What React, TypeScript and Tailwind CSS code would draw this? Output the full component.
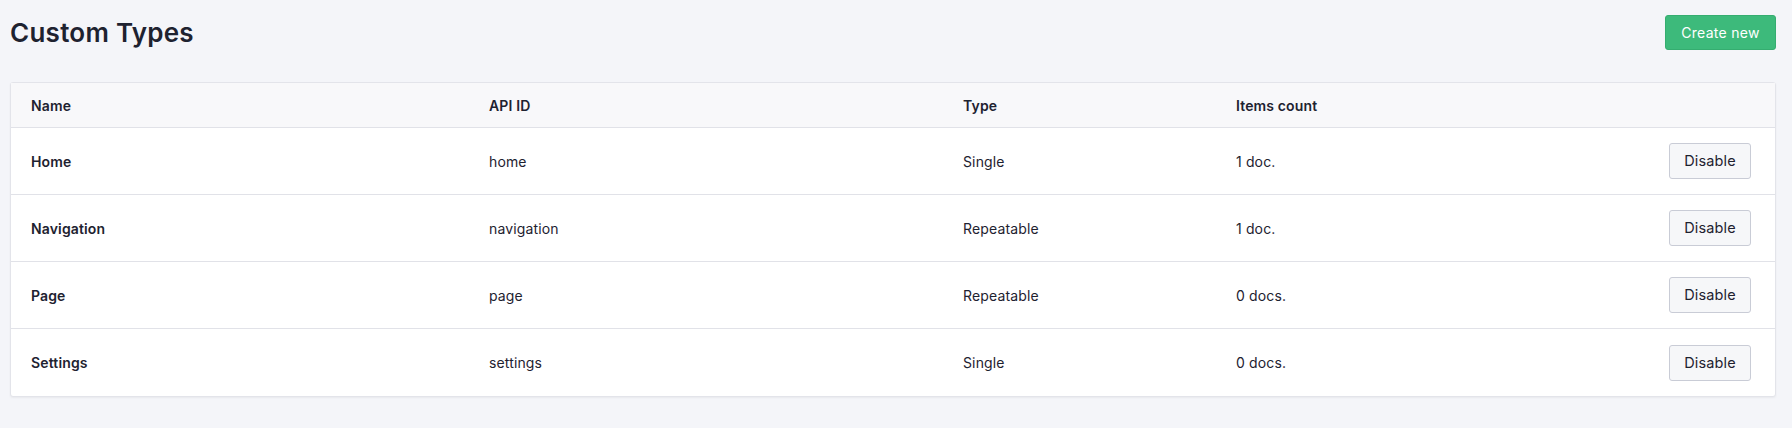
const rows = [
  { name: "Home", id: "home", type: "Single", count: "1 doc." },
  { name: "Navigation", id: "navigation", type: "Repeatable", count: "1 doc." },
  { name: "Page", id: "page", type: "Repeatable", count: "0 docs." },
  { name: "Settings", id: "settings", type: "Single", count: "0 docs." },
]

const cols = "grid grid-cols-[458px_474px_273px_1fr_auto] items-center"

export default function App() {
  return (
    <div className="min-h-[428px] bg-[#f4f5f9] pl-[10px] pr-[16px] text-[#1e2230] font-['Inter',sans-serif]">
      <div className="flex items-center justify-between h-[82px] pb-[18px]">
        <h1 className="text-[26px] font-semibold tracking-[0.01em]">Custom Types</h1>
        <button className="h-[35px] w-[111px] rounded-[3px] bg-[#3dba7b] border border-[#35ad70] text-white text-[14px] tracking-[0.02em]">
          Create new
        </button>
      </div>
      <div className="bg-white border border-[#e3e4ea] rounded-[3px] shadow-[0_1px_2px_rgba(0,0,0,0.05)]">
        <div className={`${cols} h-[45px] bg-[#f8f8fa] border-b border-[#e1e2e8] text-[14px] font-semibold tracking-[0.01em]`}>
          <div className="pl-5">Name</div>
          <div className="pl-5">API ID</div>
          <div className="pl-5">Type</div>
          <div className="pl-5">Items count</div>
          <div />
        </div>
        {rows.map((r, i) => (
          <div
            key={r.id}
            className={`${cols} h-[67px] text-[14px] tracking-[0.01em] ${i < rows.length - 1 ? "border-b border-[#e1e2e8]" : ""}`}
          >
            <div className="pl-5 font-semibold">{r.name}</div>
            <div className="pl-5">{r.id}</div>
            <div className="pl-5">{r.type}</div>
            <div className="pl-5">{r.count}</div>
            <div className="pr-6">
              <button className="h-[36px] w-[82px] rounded-[3px] bg-[#f6f7f9] border border-[#c9ccd6] text-[14.5px] tracking-[0.01em]">
                Disable
              </button>
            </div>
          </div>
        ))}
      </div>
    </div>
  )
}
